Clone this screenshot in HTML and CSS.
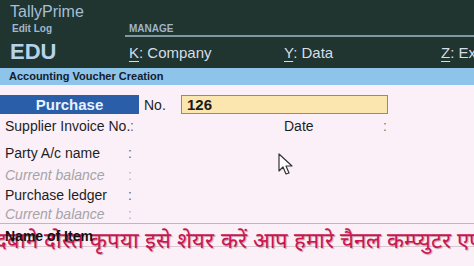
FILE: index.html
```html
<!DOCTYPE html>
<html lang="en">
<head>
    <meta charset="UTF-8">
    <title>TallyPrime - Accounting Voucher Creation</title>
    <link rel="stylesheet" href="styles.css">
</head>
<body>
    <header class="topbar">
        <div class="brand">
            <div class="product">TallyPrime</div>
            <div class="edition">Edit Log</div>
            <div class="company">EDU</div>
        </div>
        <div class="menu">
            <div class="menu-title">MANAGE</div>
            <div class="menu-items">
                <span class="item item-k"><u>K</u>: Company</span>
                <span class="item item-y"><u>Y</u>: Data</span>
                <span class="item item-z"><u>Z</u>: Ex</span>
            </div>
        </div>
    </header>

    <div class="titlebar">Accounting Voucher Creation</div>

    <main class="voucher">
        <div class="row row-type">
            <div class="vtype">Purchase</div>
            <div class="no-label">No.</div>
            <div class="no-field">126</div>
        </div>

        <div class="row row-supplier">
            <span class="label label-wide">Supplier Invoice No.</span><span class="colon">:</span>
            <span class="date-label">Date</span><span class="date-colon">:</span>
        </div>

        <div class="row row-party">
            <span class="label">Party A/c name</span><span class="colon">:</span>
        </div>
        <div class="row row-balance">
            <span class="label">Current balance</span><span class="colon">:</span>
        </div>
        <div class="row row-ledger">
            <span class="label">Purchase ledger</span><span class="colon">:</span>
        </div>
        <div class="row row-balance row-last">
            <span class="label">Current balance</span><span class="colon">:</span>
        </div>

        <div class="items-head">
            <span class="item-name">Name of Item</span>
            <span class="caption">दबाने दोस्त कृपया इसे शेयर करें आप हमारे चैनल कम्प्युटर एण्ड</span>
        </div>

        <svg class="pointer" width="16" height="24" viewBox="0 0 16 24">
            <path d="M1 1 L1 18 L5 14 L8 21 L11 20 L8 13 L14 13 Z" fill="#fff" stroke="#333" stroke-width="1.2" stroke-linejoin="round"/>
        </svg>
    </main>
</body>
</html>
```

FILE: styles.css
```css
body {
    margin: 0;
    width: 474px;
    height: 266px;
    overflow: hidden;
    font-family: "Liberation Sans", Arial, sans-serif;
    background-color: #fcf0f8;
}

/* --- header --- */
.topbar {
    display: flex;
    height: 68px;
    background-color: #203430;
    color: #a8c0d6;
}

.brand {
    flex: 0 0 125px;
    padding-left: 10px;
    box-sizing: border-box;
}

.product {
    font-size: 16px;
    line-height: 18px;
    padding-top: 3px;
    color: #a7bfd6;
}

.edition {
    font-size: 10px;
    font-weight: bold;
    line-height: 12px;
    padding-left: 2px;
    margin-top: 2px;
    color: #a2b8cc;
}

.company {
    font-size: 22px;
    font-weight: bold;
    line-height: 26px;
    margin-top: 4px;
    color: #b6d3ee;
}

.menu {
    flex: 1;
    min-width: 0;
    overflow: hidden;
}

.menu-title {
    margin-top: 23px;
    padding-left: 4px;
    height: 12px;
    font-size: 10px;
    font-weight: bold;
    line-height: 12px;
    color: #9fb5c8;
    border-bottom: 2px solid #7c9aa0;
}

.menu-items {
    display: flex;
    padding-left: 4px;
    margin-top: 8px;
    font-size: 15px;
    line-height: 16px;
    color: #d6dee6;
    white-space: nowrap;
}

.item u {
    text-decoration-thickness: 1px;
    text-underline-offset: 3px;
}

.item-k { flex: 0 0 155px; }
.item-y { flex: 0 0 157px; }

.titlebar {
    height: 17px;
    padding-left: 9px;
    font-size: 11px;
    font-weight: bold;
    line-height: 17px;
    color: #13202a;
    background-color: #8ec3ea;
}

/* --- voucher body --- */
.voucher {
    position: relative;
    padding-top: 10px;
    font-size: 14px;
    color: #1e1e1e;
}

.row {
    display: flex;
    align-items: center;
}

.row-type {
    height: 19px;
}

.vtype {
    width: 139px;
    height: 19px;
    line-height: 19px;
    text-align: center;
    font-size: 15px;
    font-weight: bold;
    color: #e8f2ff;
    background-color: #2a5ea9;
}

.no-label {
    width: 42px;
    padding-left: 5px;
    box-sizing: border-box;
}

.no-field {
    width: 207px;
    height: 19px;
    line-height: 18px;
    box-sizing: border-box;
    padding-left: 5px;
    font-size: 15px;
    font-weight: bold;
    color: #1a1a1a;
    background-color: #fce6b0;
    border: 1px solid #5e9ea6;
}

.label {
    width: 128px;
    padding-left: 5px;
    box-sizing: border-box;
    white-space: nowrap;
}

.label-wide {
    width: 130px;
}

.colon {
    width: 10px;
    color: #666;
}

.row-supplier {
    height: 24px;
}

.date-label {
    margin-left: 144px;
    width: 99px;
}

.date-colon {
    color: #777;
}

.row-party {
    height: 22px;
    margin-top: 4px;
}

.row-balance {
    height: 21px;
}

.row-balance .label {
    font-style: italic;
    color: #a4a4a8;
}

.row-balance .colon {
    color: #b4b4b4;
}

.row-ledger {
    height: 20px;
}

.row-last {
    height: 18px;
}

.items-head {
    position: relative;
    height: 22px;
    border-top: 1px solid #c4b4bc;
    border-bottom: 1px solid #d8c8d0;
}

.item-name {
    position: absolute;
    left: 5px;
    top: 4px;
    font-size: 14px;
    font-weight: bold;
    color: #111;
    z-index: 1;
}

.caption {
    position: absolute;
    left: -5px;
    top: 0;
    white-space: nowrap;
    font-size: 22px;
    color: #cc1450;
    text-shadow: 1px 1px 1px rgba(90, 0, 30, 0.35);
}

.pointer {
    position: absolute;
    left: 278px;
    top: 68px;
}
```
